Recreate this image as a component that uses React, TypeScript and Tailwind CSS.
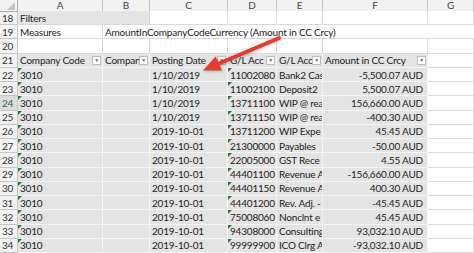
import React from "react";

const grid = "grid grid-cols-[18px_85px_47px_78px_49px_46px_105px_46px] h-[14.24px]";

const rows = [
  ["3010", "1/10/2019", "11002080", "Bank2 Cas", "-5,500.07 AUD"],
  ["3010", "1/10/2019", "11002100", "Deposit2", "5,500.07 AUD"],
  ["3010", "1/10/2019", "13711100", "WIP @ rea", "156,660.00 AUD"],
  ["3010", "1/10/2019", "13711150", "WIP @ rea", "-400.30 AUD"],
  ["3010", "2019-10-01", "13711200", "WIP Expe", "45.45 AUD"],
  ["3010", "2019-10-01", "21300000", "Payables", "-50.00 AUD"],
  ["3010", "2019-10-01", "22005000", "GST Rece", "4.55 AUD"],
  ["3010", "2019-10-01", "44401100", "Revenue A", "-156,660.00 AUD"],
  ["3010", "2019-10-01", "44401150", "Revenue A", "400.30 AUD"],
  ["3010", "2019-10-01", "44401200", "Rev. Adj. -", "-45.45 AUD"],
  ["3010", "2019-10-01", "75008060", "Nonclnt e", "45.45 AUD"],
  ["3010", "2019-10-01", "94308000", "Consulting", "93,032.10 AUD"],
  ["3010", "2019-10-01", "99999900", "ICO Clrg A", "-93,032.10 AUD"],
];

const RowHead = ({ n, active }: { n: number; active?: boolean }) => (
  <div
    className={
      "flex items-center pl-[2px] border-r border-b border-[#c6c6c6] " +
      (active ? "bg-[#dcdcdc] text-[#3b5e46]" : "bg-[#f2f2f2] text-[#333]")
    }
  >
    {n}
  </div>
);

const White = ({ children }: { children?: React.ReactNode }) => (
  <div className="flex items-center pl-[2px] border-r border-b border-[#dadada] bg-white whitespace-nowrap">
    {children}
  </div>
);

const Flag = () => (
  <span className="absolute left-0 top-0 w-0 h-0 border-t-[4px] border-r-[4px] border-t-[#1e7a3c] border-r-transparent" />
);

const Gray = ({
  children,
  flag,
  right,
}: {
  children?: React.ReactNode;
  flag?: boolean;
  right?: boolean;
}) => (
  <div
    className={
      "relative flex items-center overflow-hidden whitespace-nowrap bg-[#e4e4e4] border-r border-b border-[#f4f4f4] " +
      (right ? "justify-end pr-[4px]" : "pl-[2px]")
    }
  >
    {flag && <Flag />}
    {children}
  </div>
);

const Drop = () => (
  <span className="absolute right-[1px] top-[2.5px] w-[9px] h-[9px] bg-white border border-[#bdbdbd] flex items-center justify-center text-[5px] text-[#666] leading-none">
    ▼
  </span>
);

const HeadCell = ({ label }: { label: string }) => (
  <div className="relative flex items-center overflow-hidden whitespace-nowrap bg-[#e4e4e4] border-r border-b border-[#f4f4f4] pl-[2px]">
    {label}
    <Drop />
  </div>
);

export default function App() {
  return (
    <div
      className="relative w-[474px] h-[253px] overflow-hidden bg-white text-[10px] tracking-[-0.2px] text-[#222] leading-none"
      style={{ fontFamily: "Lato, 'Liberation Sans', sans-serif" }}
    >
      <div className="grid grid-cols-[18px_85px_47px_78px_49px_46px_105px_46px] h-[11px] text-[#444]">
        <div className="relative bg-[#f2f2f2] border-r border-b border-[#ababab] overflow-hidden">
          <svg className="absolute right-[2px] bottom-[1px]" width="8" height="8" viewBox="0 0 8 8">
            <polygon points="8,0 8,8 0,8" fill="#c4c4c4" />
          </svg>
        </div>
        {["A", "B", "C", "D", "E", "F", "G"].map((c) => (
          <div
            key={c}
            className="flex items-end justify-center pb-[1px] bg-[#f2f2f2] border-r border-b border-[#c6c6c6] border-b-[#ababab]"
          >
            {c}
          </div>
        ))}
      </div>

      <div className={grid}>
        <RowHead n={18} />
        <div className="col-span-2 flex items-center pl-[2px] bg-[#e4e4e4] border-r border-b border-[#dadada]">
          Filters
        </div>
        <White />
        <White />
        <White />
        <White />
        <White />
      </div>

      <div className={grid}>
        <RowHead n={19} />
        <White>Measures</White>
        <div className="col-span-6 flex items-center pl-[2px] bg-white border-b border-[#dadada] whitespace-nowrap">
          AmountInCompanyCodeCurrency (Amount in CC Crcy)
        </div>
      </div>

      <div className={grid}>
        <RowHead n={20} />
        <White />
        <White />
        <White />
        <White />
        <White />
        <White />
        <White />
      </div>

      <div className={grid}>
        <RowHead n={21} />
        <HeadCell label="Company Code" />
        <HeadCell label="Compan" />
        <HeadCell label="Posting Date" />
        <HeadCell label="G/L Acc" />
        <HeadCell label="G/L Acc" />
        <HeadCell label="Amount in CC Crcy" />
        <White />
      </div>

      {rows.map((r, i) => (
        <div key={i} className={grid}>
          <RowHead n={22 + i} active={i === 2} />
          <Gray flag>{r[0]}</Gray>
          <Gray />
          <Gray>{r[1]}</Gray>
          <Gray flag>{r[2]}</Gray>
          <Gray>{r[3]}</Gray>
          <Gray right>{r[4]}</Gray>
          <White />
        </div>
      ))}

      <svg
        className="absolute left-0 top-0 pointer-events-none"
        width="474"
        height="253"
        viewBox="0 0 474 253"
      >
        <g style={{ filter: "drop-shadow(1px 1px 1px rgba(0,0,0,0.25))" }}>
          <line x1="279" y1="38" x2="219" y2="63.5" stroke="#e63a2e" strokeWidth="3.6" strokeLinecap="round" />
          <polygon points="203,70.5 222,70.5 215.5,56.5" fill="#e63a2e" />
        </g>
      </svg>
    </div>
  );
}
